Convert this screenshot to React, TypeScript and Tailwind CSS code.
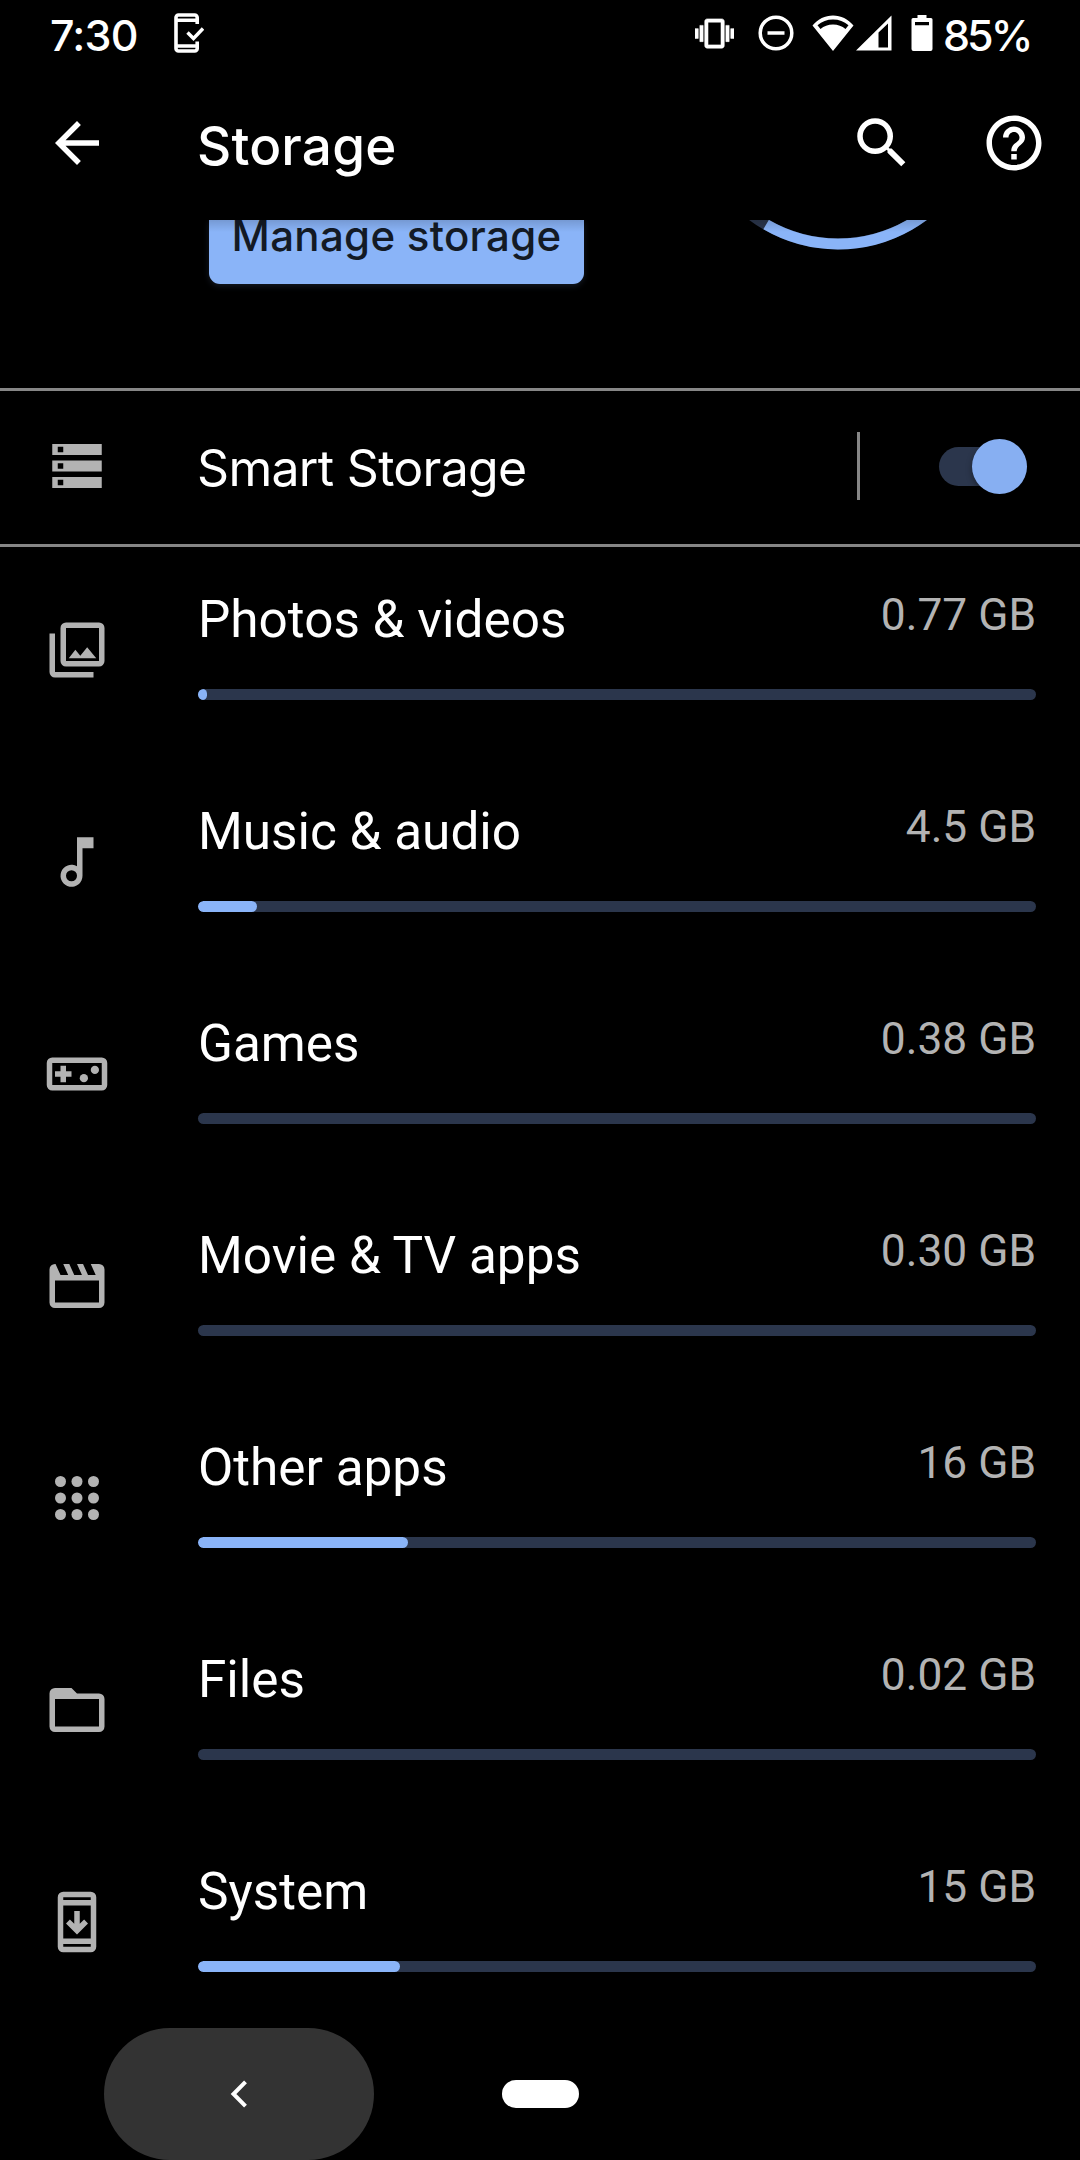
import type { ReactNode } from 'react';

type Category = {
    label: string;
    size: string;
    fill: number; // px out of the 838px track
    icon: ReactNode;
};

const TRACK = 838;

const categories: Category[] = [
    {
        label: 'Photos & videos',
        size: '0.77 GB',
        fill: 9,
        icon: (
            <>
                <path fillRule="evenodd" d="M8 2h12a2 2 0 0 1 2 2v12a2 2 0 0 1-2 2H8a2 2 0 0 1-2-2V4a2 2 0 0 1 2-2zm0 2v12h12V4H8z" />
                <path d="M9 15l2.4-3.1 1.8 2.2L15.7 11 19 15H9zM2 6h2v14h14v2H4a2 2 0 0 1-2-2V6z" />
            </>
        ),
    },
    {
        label: 'Music & audio',
        size: '4.5 GB',
        fill: 59,
        icon: <path fillRule="evenodd" d="M12 3v10.55A4 4 0 1 0 14 17V7h4V3h-6zm-2 16a2 2 0 1 1 0-4 2 2 0 0 1 0 4z" />,
    },
    {
        label: 'Games',
        size: '0.38 GB',
        fill: 0,
        icon: (
            <>
                <path fillRule="evenodd" d="M3 6h18a2 2 0 0 1 2 2v8a2 2 0 0 1-2 2H3a2 2 0 0 1-2-2V8a2 2 0 0 1 2-2zm0 2v8h18V8H3z" />
                <path d="M6 9h2v2h2v2H8v2H6v-2H4v-2h2z" />
                <circle cx="14.5" cy="13.5" r="1.5" />
                <circle cx="18.5" cy="10.5" r="1.5" />
            </>
        ),
    },
    {
        label: 'Movie & TV apps',
        size: '0.30 GB',
        fill: 0,
        icon: <path fillRule="evenodd" d="M20 4h-3l1.8 4H16l-1.8-4H12l1.8 4H11L9.200 4H7l1.800 4H6L4.200 4H4a2 2 0 0 0-2 2v12a2 2 0 0 0 2 2h16a2 2 0 0 0 2-2V6a2 2 0 0 0-2-2zM4 10h16v8H4v-8z" />,
    },
    {
        label: 'Other apps',
        size: '16 GB',
        fill: 210,
        icon: [6, 12, 18].map(y => [6, 12, 18].map(x => <circle key={`${x}-${y}`} cx={x} cy={y} r="2" />)),
    },
    {
        label: 'Files',
        size: '0.02 GB',
        fill: 0,
        icon: <path fillRule="evenodd" d="M20 6h-8l-2-2H4a2 2 0 0 0-2 2v12a2 2 0 0 0 2 2h16a2 2 0 0 0 2-2V8a2 2 0 0 0-2-2zm0 12H4V8h16v10z" />,
    },
    {
        label: 'System',
        size: '15 GB',
        fill: 202,
        icon: (
            <>
                <path fillRule="evenodd" d="M7 1h10a2 2 0 0 1 2 2v18a2 2 0 0 1-2 2H7a2 2 0 0 1-2-2V3a2 2 0 0 1 2-2zm0 2v1h10V3H7zm0 3v12h10V6H7zm0 14v1h10v-1H7z" />
                <path d="M16 12.5l-4 4-4-4 1.410-1.410L11 12.670V8h2v4.670l1.590-1.580z" />
            </>
        ),
    },
];

function Icon({ children, className = 'size-[66px]' }: { children: ReactNode; className?: string }) {
    return (
        <svg viewBox="0 0 24 24" fill="currentColor" className={`shrink-0 ${className}`}>
            {children}
        </svg>
    );
}

function StatusBar() {
    return (
        <div className="flex h-[66px] shrink-0 items-center pl-[50px] pr-[52px] text-[43px] font-medium leading-[66px]">
            <span className="w-[88px] whitespace-nowrap pt-[3px] tracking-[-0.8px]">7:30</span>
            <svg viewBox="0 0 30 40" className="ml-[36px] h-[40px] w-[30px]" fill="none" stroke="currentColor">
                <path strokeWidth="3.6" d="M23.2 11V4.500a2.500 2.500 0 0 0-2.500-2.500H4.500A2.500 2.500 0 0 0 2 4.500v31A2.500 2.500 0 0 0 4.500 38h16.200a2.500 2.500 0 0 0 2.500-2.500V28.500M2 7.200h21M2 33h21" />
                <path strokeWidth="3.4" d="M13.500 19.500l6 6L29 15.500" />
            </svg>
            <div className="flex-1" />
            <Icon className="size-[39px]">
                <path
                    stroke="currentColor"
                    strokeWidth="0.35"
                    fillRule="evenodd"
                    d="M0 15h2V9H0v6zm3 2h2V7H3v10zm19-8v6h2V9h-2zm-3 8h2V7h-2v10zM16.500 3h-9C6.670 3 6 3.670 6 4.500v15c0 .83.67 1.500 1.500 1.500h9c.83 0 1.500-.67 1.500-1.500v-15c0-.83-.67-1.500-1.500-1.500zM16 19H8V5h8v14z"
                />
            </Icon>
            <svg viewBox="0 0 36 36" className="ml-[24px] size-[36px]" fill="none" stroke="currentColor" strokeWidth="3.500">
                <circle cx="18" cy="18" r="15.800" />
                <path d="M9.500 18h17" />
            </svg>
            <svg viewBox="0 0 42 36" className="ml-[18px] h-[36px] w-[42px]" fill="currentColor">
                <path fillRule="evenodd" d="M21 36L.500 10.500C6 4 13 .500 21 .500S36 4 41.500 10.500zM8.500 14C12 11 16 9.500 21 9.500S30 11 33.500 14L36.500 10.300C32 6.500 27 4.500 21 4.500S10 6.500 5.500 10.300z" />
            </svg>
            <svg viewBox="0 0 36 36" className="ml-[2px] size-[36px]" fill="currentColor">
                <path fillRule="evenodd" d="M0 35.500L35.500 .500v35H0zM22.500 17.500v15H32V8.500z" />
            </svg>
            <svg viewBox="0 0 22 36" className="ml-[19px] h-[36px] w-[22px]" fill="currentColor">
                <path fillRule="evenodd" d="M6.500 0h9v3h4.500A1.500 1.500 0 0 1 21.500 4.500v29.500a2 2 0 0 1-2 2H2.500a2 2 0 0 1-2-2V4.500a1.500 1.500 0 0 1 1.500-1.500H6.500zM4 7v3.200h14V7z" />
            </svg>
            <span className="ml-[10px] w-[85px] whitespace-nowrap pt-[3px] tracking-[-3px]">85%</span>
        </div>
    );
}

function AppBar() {
    return (
        <header className="flex h-[154px] shrink-0 items-center pl-[44px] pr-[33px]">
            <Icon>
                <path d="M20 11H7.830l5.590-5.590L12 4l-8 8 8 8 1.410-1.410L7.830 13H20v-2z" />
            </Icon>
            <h1 className="ml-[87px] flex-1 pt-[5px] text-[53px] font-medium leading-[60px] tracking-[0.2px]">Storage</h1>
            <Icon>
                <path d="M15.500 14h-.79l-.28-.27A6.471 6.471 0 0 0 16 9.500 6.500 6.500 0 1 0 9.500 16c1.610 0 3.090-.59 4.230-1.570l.27.28v.79l5 4.990L20.490 19l-4.990-5zm-6 0C7.010 14 5 11.990 5 9.500S7.010 5 9.500 5 14 7.010 14 9.500 11.990 14 9.500 14z" />
            </Icon>
            <Icon className="ml-[66px] size-[66px]">
                <path d="M11 18h2v-2h-2v2zm1-16C6.480 2 2 6.480 2 12s4.480 10 10 10 10-4.480 10-10S17.520 2 12 2zm0 18c-4.410 0-8-3.590-8-8s3.590-8 8-8 8 3.590 8 8-3.590 8-8 8zm0-14c-2.210 0-4 1.790-4 4h2c0-1.100.9-2 2-2s2 .9 2 2c0 2-3 1.750-3 5h2c0-2.250 3-2.500 3-5 0-2.210-1.790-4-4-4z" />
            </Icon>
        </header>
    );
}

// Storage summary, scrolled most of the way under the app bar
function Summary() {
    return (
        <section className="relative flex h-[168px] shrink-0 items-start overflow-hidden pl-[209px]">
            <div className="flex h-[64px] w-[375px] items-start justify-center rounded-b-[11px] bg-[#8ab4f8] text-[#131a25] shadow-[0_2px_6px_rgba(138,180,248,0.15)]">
                <span className="-mt-[14px] whitespace-nowrap text-[42px] font-medium leading-[60px] tracking-[0.3px]">Manage storage</span>
            </div>
            <svg viewBox="0 0 300 168" className="ml-[104px] h-[168px] w-[300px]" fill="none" strokeWidth="11">
                <circle cx="150" cy="-119" r="143" stroke="#2b364c" />
                <path stroke="#8ab4f8" d="M78.100 4.600A143 143 0 0 0 293 -119" />
            </svg>
            <div className="absolute inset-x-0 top-0 h-[12px] bg-linear-to-b from-black/15 to-transparent" />
        </section>
    );
}

function SmartStorage() {
    return (
        <section className="flex h-[159px] shrink-0 items-center border-y-3 border-[#868686] pb-[3px] pl-[44px] pr-[53px]">
            <Icon className="size-[66px] text-[#b3b3b3]">
                <path fillRule="evenodd" d="M3 4h18v4H3zM5 5v2h2V5zM3 10h18v4H3zM5 11v2h2v-2zM3 16h18v4H3zM5 17v2h2v-2z" />
            </Icon>
            <span className="ml-[87px] flex-1 pt-[4px] text-[50px] leading-[60px] tracking-[-0.7px]">Smart Storage</span>
            <div className="h-[68px] w-[3px] bg-[#868686]" />
            <div className="ml-[79px] flex h-[39px] w-[88px] items-center justify-end rounded-full bg-[#2b364c]">
                <div className="size-[55px] shrink-0 rounded-full bg-[#87aff2] shadow-[0_3px_6px_rgba(0,0,0,0.35)]" />
            </div>
        </section>
    );
}

function CategoryRow({ label, size, fill, icon }: Category) {
    return (
        <li className="flex h-[212px] items-start pl-[44px] pr-[44px]">
            <Icon className="mt-[70px] size-[66px] text-[#b3b3b3]">{icon}</Icon>
            <div className="ml-[88px] flex-1">
                <div className="flex h-[142px] items-start justify-between">
                    <span className="mt-[43px] text-[51.3px] leading-[60px]">{label}</span>
                    <span className="mt-[41px] text-[44.3px] leading-[54px] text-[#b3b3b3]">{size}</span>
                </div>
                <div className="h-[11px] overflow-hidden rounded-full bg-[#2b364c]">
                    <div className="h-full rounded-full bg-[#8ab4f8]" style={{ width: `${(fill / TRACK) * 100}%` }} />
                </div>
            </div>
        </li>
    );
}

function NavBar() {
    return (
        <nav className="flex h-[132px] shrink-0 items-center pl-[104px]">
            <div className="flex h-[132px] w-[270px] items-center justify-center rounded-full bg-[#333333]">
                <svg viewBox="0 0 18 28" className="h-[28px] w-[18px]" fill="none" stroke="currentColor" strokeWidth="4">
                    <path d="M15.500 1.800L3.500 14l12 12.200" />
                </svg>
            </div>
            <div className="ml-[128px] h-[28px] w-[77px] rounded-full bg-white" />
        </nav>
    );
}

export default function App() {
    return (
        <div className="flex h-[2160px] w-[1080px] flex-col overflow-hidden bg-black font-['Inter',sans-serif] text-white">
            <StatusBar />
            <AppBar />
            <Summary />
            <SmartStorage />
            <ul className="h-[1481px] shrink-0 overflow-hidden font-['Roboto',sans-serif]">
                {categories.map(c => (
                    <CategoryRow key={c.label} {...c} />
                ))}
            </ul>
            <NavBar />
        </div>
    );
}
